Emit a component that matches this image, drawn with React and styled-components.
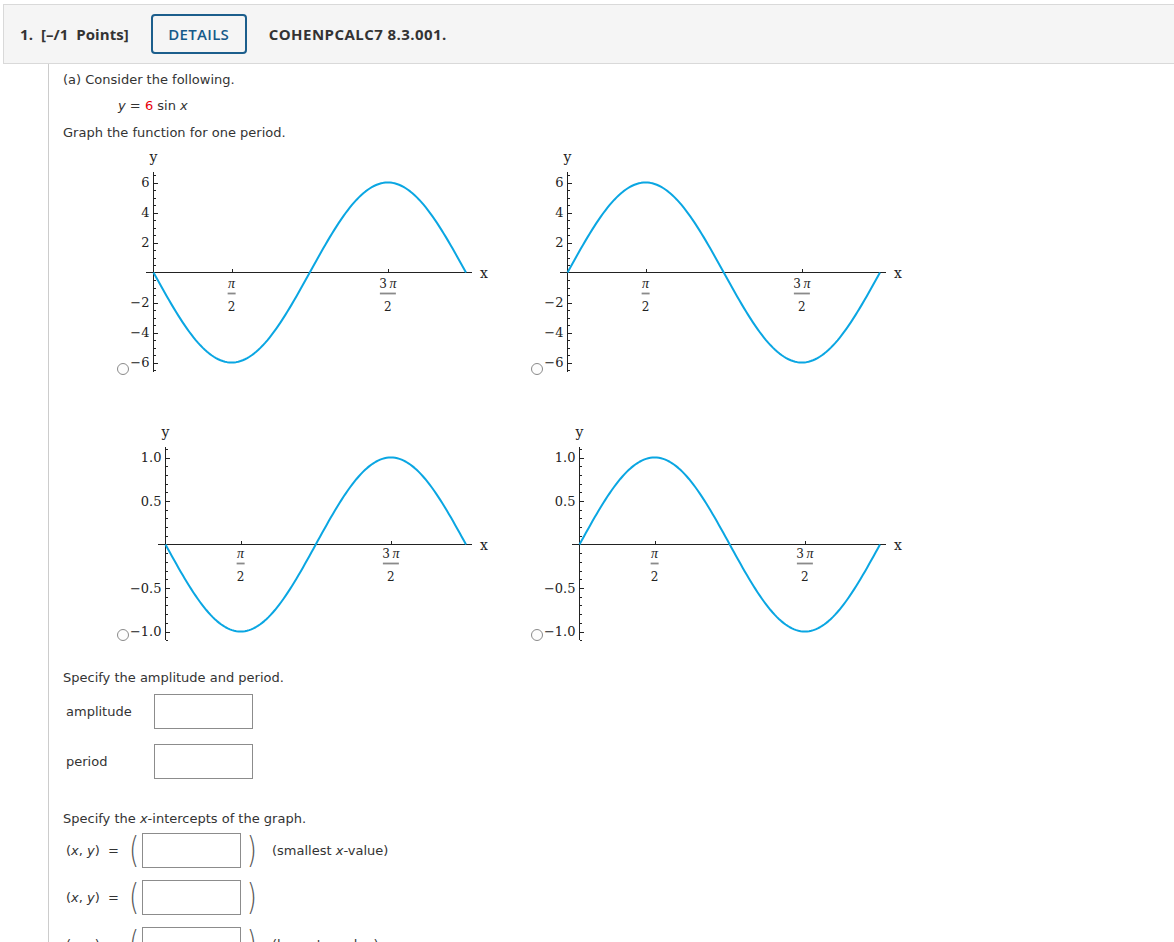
import styled, { createGlobalStyle } from 'styled-components';

const GlobalStyle = createGlobalStyle`
  body {
    margin: 0;
    background: #ffffff;
    font-family: "DejaVu Sans", Verdana, sans-serif;
    color: #333333;
  }
`;

const Page = styled.div`
  padding: 4px 0 0 3px;
`;

const Header = styled.div`
  display: flex;
  align-items: center;
  height: 58px;
  background: #f5f5f5;
  border: 1px solid #d9d9d9;
  border-right: none;
  padding-left: 16px;
  font-family: "Open Sans", "Noto Sans", sans-serif;
  font-size: 15px;
  font-weight: 700;
  color: #333333;
`;

const Points = styled.span`
  margin-right: 22px;
  word-spacing: 4px;
  letter-spacing: 0.05px;
`;

const Code = styled.span`
  letter-spacing: 0.45px;
`;

const DetailsButton = styled.button`
  height: 40px;
  width: 96px;
  border: 2px solid #1c5e8c;
  border-radius: 4px;
  background: transparent;
  color: #165a8a;
  font-family: "Open Sans", "Noto Sans", sans-serif;
  font-size: 15px;
  font-weight: 600;
  letter-spacing: 0.3px;
  margin-right: 22px;
  padding: 0;
`;

const Main = styled.div`
  margin-left: 45px;
  border-left: 1px solid #cccccc;
  padding: 7px 0 40px 14px;
  font-size: 13px;
  line-height: 18px;
`;

const Line = styled.div`
  margin-top: ${({ $top }) => $top || 0}px;
  margin-left: ${({ $indent }) => $indent || 0}px;
`;

const Red = styled.span`
  color: #e8000b;
`;

const GraphGrid = styled.div`
  display: grid;
  grid-template-columns: 414px 414px;
  row-gap: 43px;
  margin: 3px 0 0 54px;
`;

const GraphCell = styled.div`
  display: flex;
  align-items: flex-end;
`;

const Radio = styled.input`
  appearance: none;
  width: 12px;
  height: 12px;
  margin: 0 1px ${({ $bottom }) => $bottom}px 0;
  border: 1px solid #8a8a8a;
  border-radius: 50%;
  background: #fdfdfd;
  flex-shrink: 0;
`;

const FieldRow = styled.div`
  display: flex;
  align-items: center;
  margin-top: ${({ $top }) => $top}px;
`;

const FieldLabel = styled.span`
  width: ${({ $width }) => $width}px;
  padding-left: 3px;
  flex-shrink: 0;
`;

const AnswerBox = styled.input`
  width: 99px;
  height: 35px;
  box-sizing: border-box;
  border: 1px solid #8c8c8c;
  margin: 0;
  padding: 0 4px;
  background: #ffffff;
`;

const Paren = styled.span`
  display: inline-block;
  width: ${({ $width }) => $width}px;
  font-family: "DejaVu Sans", sans-serif;
  font-weight: 200;
  font-size: 26px;
  line-height: 35px;
  color: #555555;
  transform: scaleY(1.35);
  text-align: ${({ $align }) => $align};
`;

const Note = styled.span`
  margin-left: 15px;
`;

const SERIF = "'DejaVu Serif', 'Liberation Serif', serif";

const SCALES = {
  six: {
    height: 232,
    x0: 23.5,
    x1: 336,
    y0: 127.5,
    unit: 15,
    amp: 6,
    axisTop: 27,
    axisBottom: 227,
    xStart: 16,
    majors: [-6, -4, -2, 2, 4, 6],
    minor: 0.5,
    range: 6.6,
    fmt: (v) => (v < 0 ? '\u2212' + -v : String(v)),
    fracOffset: 0,
  },
  one: {
    height: 223,
    x0: 35.5,
    x1: 336,
    y0: 124.5,
    unit: 87,
    amp: 1,
    axisTop: 27,
    axisBottom: 220,
    xStart: 28,
    majors: [-1, -0.5, 0.5, 1],
    minor: 0.1,
    range: 1.1,
    fmt: (v) => (v < 0 ? '\u2212' + (-v).toFixed(1) : v.toFixed(1)),
    fracOffset: -2,
  },
};

const sinePath = (s, sign) => {
  const pts = [];
  const n = 140;
  for (let i = 0; i <= n; i++) {
    const t = (i / n) * Math.PI * 2;
    const x = s.x0 + ((s.x1 - s.x0) * i) / n;
    const y = s.y0 - sign * Math.sin(t) * s.unit * s.amp;
    pts.push(`${i === 0 ? 'M' : 'L'}${x.toFixed(2)},${y.toFixed(2)}`);
  }
  return pts.join(' ');
};

const Fraction = ({ x, y, top, wide }) => (
  <g fontFamily={SERIF} fontSize="12" fill="#222">
    <text x={x} y={y + 15} textAnchor="middle">
      {top}
    </text>
    <line
      x1={x - (wide ? 8 : 4)}
      x2={x + (wide ? 8 : 4)}
      y1={y + 21}
      y2={y + 21}
      stroke="#8a8a8a"
      strokeWidth="1.8"
    />
    <text x={x} y={y + 38} textAnchor="middle">
      2
    </text>
  </g>
);

const Pi = () => (
  <tspan fontFamily="'Liberation Serif', serif" fontStyle="italic" fontSize="14">
    {'\u03c0'}
  </tspan>
);

const Graph = ({ kind, sign }) => {
  const s = SCALES[kind];
  const quarter = (s.x1 - s.x0) / 4;
  const minors = [];
  const steps = Math.floor(s.range / s.minor);
  for (let i = -steps; i <= steps; i++) {
    const v = i * s.minor;
    if (i === 0) continue;
    if (s.majors.some((m) => Math.abs(m - v) < 1e-6)) continue;
    minors.push(Math.round(s.y0 - v * s.unit) + 0.5);
  }
  const fy = s.y0 + s.fracOffset;
  return (
    <svg width="400" height={s.height} viewBox={`0 0 400 ${s.height}`}>
      <text x={s.x0} y="17" textAnchor="middle" fontFamily={SERIF} fontSize="14" fill="#222">
        y
      </text>
      <g stroke="#222" strokeWidth="1" shapeRendering="crispEdges">
        <line x1={s.x0} x2={s.x0} y1={s.axisTop} y2={s.axisBottom} />
        <line x1={s.xStart} x2="342" y1={s.y0} y2={s.y0} />
        {minors.map((y) => (
          <line key={y} x1={s.x0} x2={s.x0 + 2} y1={y} y2={y} />
        ))}
        {s.majors.map((v) => {
          const y = Math.round(s.y0 - v * s.unit) + 0.5;
          return <line key={v} x1={s.x0} x2={s.x0 + 4} y1={y} y2={y} />;
        })}
        {[1, 3].map((k) => {
          const x = Math.round(s.x0 + k * quarter) + 0.5;
          return <line key={k} x1={x} x2={x} y1={s.y0 - 4} y2={s.y0} />;
        })}
      </g>
      {s.majors.map((v) => (
        <text
          key={v}
          x={s.x0 - 4}
          y={s.y0 - v * s.unit + 4.5}
          textAnchor="end"
          fontFamily={SERIF}
          fontSize="13"
          fill="#222"
        >
          {s.fmt(v)}
        </text>
      ))}
      <Fraction x={s.x0 + quarter} y={fy} top={<Pi />} />
      <Fraction x={s.x0 + 3 * quarter} y={fy} top={<>3{'\u2009'}<Pi /></>} wide />
      <text x="354" y={s.y0 + 5} textAnchor="middle" fontFamily={SERIF} fontSize="14" fill="#222">
        x
      </text>
      <path
        d={sinePath(s, sign)}
        fill="none"
        stroke="#0aa6e2"
        strokeWidth="2"
        strokeLinejoin="round"
      />
    </svg>
  );
};

const graphs = [
  { kind: 'six', sign: -1, bottom: 2 },
  { kind: 'six', sign: 1, bottom: 2 },
  { kind: 'one', sign: -1, bottom: 2 },
  { kind: 'one', sign: 1, bottom: 2 },
];

const Intercept = ({ top, note }) => (
  <FieldRow $top={top}>
    <FieldLabel $width={63}>
      (<i>x</i>, <i>y</i>) &nbsp;=
    </FieldLabel>
    <Paren $width={13} $align="left">(</Paren>
    <AnswerBox type="text" />
    <Paren $width={16} $align="right">)</Paren>
    {note && <Note>{note}</Note>}
  </FieldRow>
);

const App = () => (
  <>
    <GlobalStyle />
    <Page>
      <Header>
        <Points>1. [–/1 Points]</Points>
        <DetailsButton type="button">DETAILS</DetailsButton>
        <Code>COHENPCALC7 8.3.001.</Code>
      </Header>
      <Main>
        <Line>(a) Consider the following.</Line>
        <Line $top={8} $indent={55}>
          <i>y</i> = <Red>6</Red> sin <i>x</i>
        </Line>
        <Line $top={9}>Graph the function for one period.</Line>
        <GraphGrid>
          {graphs.map((g, i) => (
            <GraphCell key={i}>
              <Radio type="radio" name="graph" $bottom={g.bottom} />
              <Graph kind={g.kind} sign={g.sign} />
            </GraphCell>
          ))}
        </GraphGrid>
        <Line $top={26}>Specify the amplitude and period.</Line>
        <FieldRow $top={7}>
          <FieldLabel $width={88}>amplitude</FieldLabel>
          <AnswerBox type="text" />
        </FieldRow>
        <FieldRow $top={15}>
          <FieldLabel $width={88}>period</FieldLabel>
          <AnswerBox type="text" />
        </FieldRow>
        <Line $top={31}>
          Specify the <i>x</i>-intercepts of the graph.
        </Line>
        <Intercept top={5} note={<>(smallest <i>x</i>-value)</>} />
        <Intercept top={12} />
        <Intercept top={12} note={<>(largest <i>x</i>-value)</>} />
      </Main>
    </Page>
  </>
);

export default App;
